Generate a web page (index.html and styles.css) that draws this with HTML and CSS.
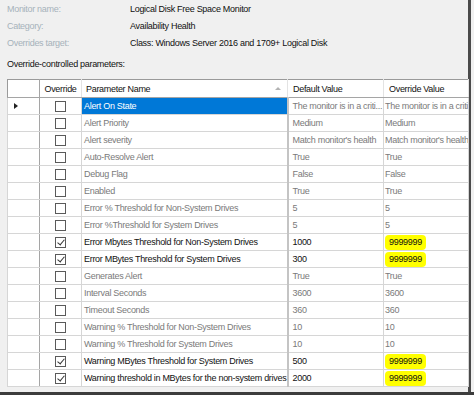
FILE: index.html
```html
<!DOCTYPE html>
<html lang="en">
<head>
    <meta charset="UTF-8">
    <title>Override Properties</title>
    <link rel="stylesheet" href="styles.css">
</head>
<body>
    <div class="window">
        <div class="info">
            <div class="info-row"><span class="info-label">Monitor name:</span><span class="info-value">Logical Disk Free Space Monitor</span></div>
            <div class="info-row"><span class="info-label">Category:</span><span class="info-value">Availability Health</span></div>
            <div class="info-row"><span class="info-label">Overrides target:</span><span class="info-value">Class: Windows Server 2016 and 1709+ Logical Disk</span></div>
        </div>
        <div class="grid-title">Override-controlled parameters:</div>
        <table class="grid">
            <colgroup>
                <col class="c-row"><col class="c-check"><col class="c-name"><col class="c-default"><col class="c-value">
            </colgroup>
            <thead>
                <tr>
                    <th class="rowhead"></th>
                    <th class="center">Override</th>
                    <th class="sorted">Parameter Name<span class="sort-arrow"></span></th>
                    <th>Default Value</th>
                    <th>Override Value</th>
                </tr>
            </thead>
            <tbody>
                <tr><td class="rowhead"><span class="current"></span></td><td class="center"><span class="check"></span></td><td class="selected">Alert On State</td><td>The monitor is in a criti...</td><td>The monitor is in a criti.</td></tr>
                <tr><td class="rowhead"></td><td class="center"><span class="check"></span></td><td>Alert Priority</td><td>Medium</td><td>Medium</td></tr>
                <tr><td class="rowhead"></td><td class="center"><span class="check"></span></td><td>Alert severity</td><td>Match monitor's health</td><td>Match monitor's health</td></tr>
                <tr><td class="rowhead"></td><td class="center"><span class="check"></span></td><td>Auto-Resolve Alert</td><td>True</td><td>True</td></tr>
                <tr><td class="rowhead"></td><td class="center"><span class="check"></span></td><td>Debug Flag</td><td>False</td><td>False</td></tr>
                <tr><td class="rowhead"></td><td class="center"><span class="check"></span></td><td>Enabled</td><td>True</td><td>True</td></tr>
                <tr><td class="rowhead"></td><td class="center"><span class="check"></span></td><td>Error % Threshold for Non-System Drives</td><td>5</td><td>5</td></tr>
                <tr><td class="rowhead"></td><td class="center"><span class="check"></span></td><td>Error %Threshold for System Drives</td><td>5</td><td>5</td></tr>
                <tr class="on"><td class="rowhead"></td><td class="center"><span class="check checked"></span></td><td>Error Mbytes Threshold for Non-System Drives</td><td>1000</td><td><span class="mark">9999999</span></td></tr>
                <tr class="on"><td class="rowhead"></td><td class="center"><span class="check checked"></span></td><td>Error MBytes Threshold for System Drives</td><td>300</td><td><span class="mark">9999999</span></td></tr>
                <tr><td class="rowhead"></td><td class="center"><span class="check"></span></td><td>Generates Alert</td><td>True</td><td>True</td></tr>
                <tr><td class="rowhead"></td><td class="center"><span class="check"></span></td><td>Interval Seconds</td><td>3600</td><td>3600</td></tr>
                <tr><td class="rowhead"></td><td class="center"><span class="check"></span></td><td>Timeout Seconds</td><td>360</td><td>360</td></tr>
                <tr><td class="rowhead"></td><td class="center"><span class="check"></span></td><td>Warning % Threshold for Non-System Drives</td><td>10</td><td>10</td></tr>
                <tr><td class="rowhead"></td><td class="center"><span class="check"></span></td><td>Warning % Threshold for System Drives</td><td>10</td><td>10</td></tr>
                <tr class="on"><td class="rowhead"></td><td class="center"><span class="check checked"></span></td><td>Warning MBytes Threshold for System Drives</td><td>500</td><td><span class="mark">9999999</span></td></tr>
                <tr class="on"><td class="rowhead"></td><td class="center"><span class="check checked"></span></td><td>Warning threshold in MBytes for the non-system drives</td><td>2000</td><td><span class="mark">9999999</span></td></tr>
            </tbody>
        </table>
    </div>
</body>
</html>
```

FILE: styles.css
```css
* { margin: 0; padding: 0; box-sizing: border-box; }
html, body { width: 474px; height: 395px; overflow: hidden; }
body { background-color: #f0f0f0; font-family: 'Liberation Sans', Arial, sans-serif; font-size: 9px; letter-spacing: -0.3px; color: #1a1a1a; border-bottom: 3px solid #3c3c3c; }
.window { height: 392px; width: 471px; border-right: 3px solid #4a4a4a; padding: 0 0 0 7px; }
.info { display: flex; flex-direction: column; }
.info-row { display: flex; height: 17px; align-items: center; }
.info-label { width: 123px; color: #a6b2bb; }
.info-value { color: #111; }
.grid-title { margin-top: 5px; height: 16px; line-height: 16px; color: #111; }
.grid { margin-top: 7px; border-collapse: collapse; table-layout: fixed; width: 461px; background: #fff; border: 1px solid #9a9a9a; }
.c-row { width: 32px; }
.c-check { width: 42px; }
.c-name { width: 206px; }
.c-default { width: 96px; }
.c-value { width: 85px; }
.grid th { height: 18px; font-weight: normal; text-align: left; padding: 0 5px; color: #111; border-right: 1px solid #e3e3e3; border-bottom: 1px solid #a5a5a5; white-space: nowrap; overflow: hidden; }
.grid th.center, .grid td.center { text-align: center; padding: 0; }
.grid th.sorted { position: relative; padding-left: 4px; }
.sort-arrow { position: absolute; right: 6px; top: 7px; width: 0; height: 0; border-left: 3px solid transparent; border-right: 3px solid transparent; border-bottom: 3px solid #b3b3b3; }
.grid td { height: 17px; padding: 0 4px; color: #7a7a7a; border: 1px solid #d6d6d6; white-space: nowrap; overflow: hidden; }
.grid td:nth-child(3) { padding-left: 2px; border-right: 2px solid #c4c4c4; }
.grid tr.on td { color: #111; }
.grid td.rowhead, .grid th.rowhead { background: #fff; border-right: 1px solid #a5a5a5; position: relative; }
.grid td.selected { background: #0078d7; color: #fff; }
.current { position: absolute; left: 6px; top: 5px; width: 0; height: 0; border-top: 3px solid transparent; border-bottom: 3px solid transparent; border-left: 4px solid #222; }
.check { display: inline-block; width: 11px; height: 11px; border: 1px solid #5a5a5a; background: #fff; vertical-align: middle; position: relative; }
.check.checked::after { content: ''; position: absolute; left: 3px; top: 0; width: 3px; height: 6px; border: solid #333; border-width: 0 1px 1px 0; transform: rotate(40deg); }
.grid td:last-child { padding-left: 1px; padding-right: 0; }
.mark { display: inline-block; background: #ffff00; height: 15px; line-height: 15px; padding: 0 4px; border-radius: 4px; color: #111; }
```
